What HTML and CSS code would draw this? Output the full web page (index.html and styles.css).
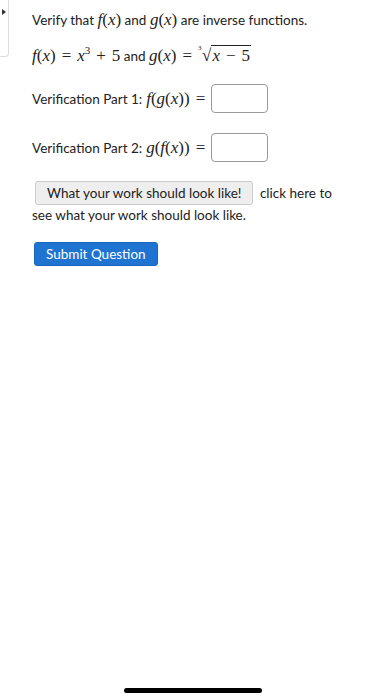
FILE: index.html
```html
<!DOCTYPE html>
<html lang="en">
  <head>
    <meta charset="UTF-8" />
    <meta name="viewport" content="width=device-width, initial-scale=1.0" />
    <title>Problem</title>
    <link rel="stylesheet" href="styles.css">
  </head>
  <body>
    <div class="side-tab"><span class="tab-arrow"></span></div>
    <form class="problem" action="">
      <p class="line intro">Verify that <span class="m"><i>f</i>(<i>x</i>)</span> and <span class="m"><i>g</i>(<i>x</i>)</span> are inverse functions.</p>
      <p class="line defs">
        <span class="m"><i>f</i>(<i>x</i>)<span class="op">=</span><i>x</i><sup>3</sup><span class="op">+</span>5</span> and
        <span class="m"><i>g</i>(<i>x</i>)<span class="op">=</span><span class="root"><sup class="idx">3</sup>&radic;<span class="rad"><i>x</i><span class="op">&minus;</span>5</span></span></span>
      </p>
      <p class="line ans">Verification Part 1: <span class="m"><i>f</i>(<i>g</i>(<i>x</i>))<span class="op">=</span></span><input type="text" class="box" /></p>
      <p class="line ans">Verification Part 2: <span class="m"><i>g</i>(<i>f</i>(<i>x</i>))<span class="op">=</span></span><input type="text" class="box" /></p>
      <p class="line hint"><button type="button" class="btn-hint">What your work should look like!</button> <span>click here to see what your work should look like.</span></p>
      <p class="line submit"><button type="submit" class="btn-submit">Submit Question</button></p>
    </form>
    <div class="home-bar"></div>
  </body>
</html>
```

FILE: styles.css
```css
body {
  margin: 0;
  height: 700px;
  position: relative;
  background: #fff;
  font-family: Lato, "Open Sans", sans-serif;
  font-size: 13.5px;
  color: #222;
}

/* collapsed side panel at the left edge */
.side-tab {
  position: absolute;
  left: 0;
  top: 0;
  width: 8px;
  height: 56px;
  border: 1px solid #ddd;
  border-left: none;
  border-top: none;
  border-radius: 0 0 4px 0;
}
.tab-arrow {
  position: absolute;
  left: 2px;
  top: 9px;
  border-left: 4px solid #333;
  border-top: 3.5px solid transparent;
  border-bottom: 3.5px solid transparent;
}

.problem {
  padding: 10px 42px 0 32px;
}

.line {
  margin: 0;
  line-height: 20px;
}
.defs {
  margin-top: 16px;
}

.m {
  font-family: "Liberation Serif", serif;
  font-size: 17px;
  white-space: nowrap;
}
.m i {
  font-style: italic;
}
.op {
  padding: 0 6px;
}
.m sup {
  font-size: 11px;
  line-height: 0;
}
.root {
  position: relative;
  padding-left: 4px;
}
.root .idx {
  position: absolute;
  left: 0;
  top: 2px;
  font-size: 7px;
}
.rad {
  border-top: 1px solid #222;
  padding: 0 1px;
}

.ans {
  display: flex;
  align-items: center;
  margin-top: 18px;
  white-space: nowrap;
}
.ans + .ans {
  margin-top: 20px;
}
.ans .m {
  margin-left: 4px;
}
.box {
  width: 57px;
  height: 29px;
  box-sizing: border-box;
  border: 1px solid #999;
  border-radius: 4px;
  margin: 0;
}

.hint {
  margin-top: 19px;
  line-height: 21px;
}
.btn-hint {
  font-family: inherit;
  font-size: 13.5px;
  line-height: 16px;
  color: #222;
  background: #eee;
  border: 1px solid #ccc;
  border-radius: 3px;
  padding: 3px 11px;
  margin: 0 3px 0 3px;
}

.submit {
  margin-top: 16px;
}
.btn-submit {
  font-family: inherit;
  font-size: 13.5px;
  line-height: 16px;
  color: #fff;
  background: #1f74d2;
  border: 1px solid #1a66bb;
  border-radius: 3px;
  padding: 3px 11px;
  margin-left: 2px;
}

.home-bar {
  position: absolute;
  left: 124px;
  top: 688px;
  width: 138px;
  height: 5px;
  border-radius: 3px;
  background: #000;
}
```
